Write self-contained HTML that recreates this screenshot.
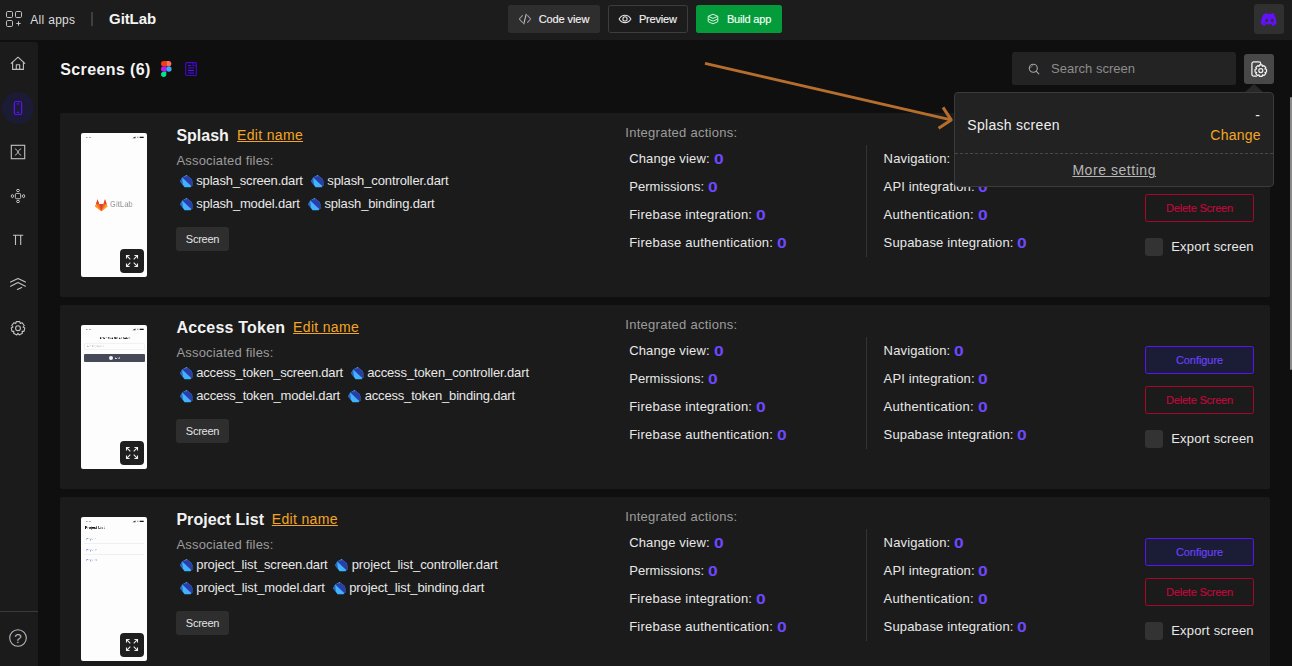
<!DOCTYPE html>
<html lang="en">
<head>
<meta charset="utf-8">
<title>GitLab - Screens</title>
<style>
*{box-sizing:border-box;margin:0;padding:0}
html,body{width:1292px;height:666px;overflow:hidden;background:#0f0f0f;color:#e6e6e6;
  font-family:"Liberation Sans",sans-serif;font-size:13px;}
body{position:relative}
svg{position:absolute;overflow:visible}
.t{position:absolute;white-space:nowrap}
/* header */
#hdr{position:absolute;left:0;top:0;width:1292px;height:40px;background:#1c1c1c}
#hdr .sep{position:absolute;left:91px;top:12px;width:2px;height:14px;background:#3f3f3f}
.hbtn{position:absolute;top:5px;height:28px;border-radius:2.500px}
#b-code{left:508px;width:92px;background:#2e2e2e}
#b-prev{left:608px;width:80px;border:1px solid #3d3d3d}
#b-build{left:696px;width:86px;background:#049c3a}
#b-disc{position:absolute;left:1254px;top:4px;width:30px;height:30px;border-radius:3px;background:#303030}
/* sidebar */
#side{position:absolute;left:0;top:42px;width:38px;height:624px;background:#1b1b1b;border-top-right-radius:3px}
#side .act{position:absolute;left:2px;top:50px;width:32px;height:32px;border-radius:16px;background:#1c1b36}
#side .ln{position:absolute;left:0;top:569px;width:38px;height:1px;background:#3a3a3a}
/* toolbar */
#search{position:absolute;left:1012px;top:52px;width:224px;height:33px;border-radius:2.500px;background:#232323}
#setbtn{position:absolute;left:1244px;top:54px;width:30px;height:30px;border-radius:3px;background:#484848}
#pop{position:absolute;left:954px;top:92px;width:320px;height:95px;border:1px solid #3b3b3b;border-radius:4px;background:#222222}
#pop .hr{position:absolute;left:0;right:0;top:60px;height:1px;background:repeating-linear-gradient(90deg,#484848 0,#484848 3px,transparent 3px,transparent 5px)}
#poparrow{position:absolute;left:1245px;top:84.200px;width:0;height:0;border-left:9px solid transparent;border-right:9px solid transparent;border-bottom:8.500px solid #282828}
#scroll{position:absolute;left:1290px;top:97px;width:2px;height:273px;background:#8a8a8a;border-radius:1px}
/* cards */
.card{position:absolute;left:60px;width:1210px;height:184px;background:#1b1b1b;border-radius:2px}
.card .th{position:absolute;left:21px;top:20px;width:66px;height:144px;background:#fdfdfd;border-radius:2px;overflow:hidden}
.card .ex{position:absolute;left:60px;top:136px;width:24px;height:24px;border-radius:4px;background:#1f1f1f}
.card h3{font-size:16px;font-weight:bold;color:#f2f2f2;line-height:22px}
.card .en{font-size:14px;color:#f5a524;line-height:22px;text-decoration:underline;text-underline-offset:1px;text-decoration-thickness:1px;letter-spacing:.33px}
.card .af{font-size:13px;color:#9c9c9c;line-height:18px;letter-spacing:.19px}
.card .fn{font-size:13px;color:#e8e8e8;line-height:18px}
.card .chip{position:absolute;left:116px;top:114px;width:53px;height:24px;border-radius:3px;background:#2e2e2e}
.card .chip .t{left:0;width:53px;text-align:center;font-size:11px;line-height:16px;color:#e4e4e4;letter-spacing:-.25px}
.card .ia{font-size:13px;color:#9c9c9c;line-height:18px;letter-spacing:.27px}
.card .row{font-size:13px;color:#e8e8e8;line-height:18px}
.card .num{font-size:15px;font-weight:bold;color:#6e48ff;line-height:18px}
.card .vl{position:absolute;left:806px;top:32px;width:1px;height:112px;background:#333}
.card .cfg,.card .del{position:absolute;left:1085px;width:109px;height:28px;border-radius:2.500px}
.card .cfg{top:41px;border:1px solid #5c14f6;background:#1b1c35}
.card .del{top:81px;border:1px solid #a8062c}
.card .cfg .t,.card .del .t{left:0;width:107px;text-align:center;font-size:11px;line-height:16px}
.card .cfg .t{color:#6b42fa;letter-spacing:-.06px;-webkit-text-stroke:.15px #6b42fa}
.card .del .t{color:#c2083c;letter-spacing:-.22px;-webkit-text-stroke:.15px #c2083c}
.card .cb{position:absolute;left:1085px;top:125px;width:18px;height:18px;border-radius:3px;background:#333}
.card .ext{font-size:13px;line-height:18px;color:#e8e8e8;letter-spacing:.18px}
.tiny{position:absolute;white-space:nowrap;transform-origin:0 0;font-size:10px;line-height:10px;will-change:transform}
</style>
</head>
<body>
<div id="hdr">
<svg style="left:6px;top:11px" width="16" height="16" viewBox="0 0 16 16" ><g fill="none" stroke="#c2c2c2" stroke-width="1"><rect x=".5" y=".5" width="6" height="6" rx="1.2"/><rect x="9.5" y=".5" width="6" height="6" rx="1.2"/><rect x=".5" y="9.5" width="6" height="6" rx="1.2"/><path d="M12.5 10.3v4.4M10.3 12.5h4.4"/></g></svg>
<div class="t" style="left:30.3px;top:11.54px;font-size:12px;line-height:16px;color:#dedede;letter-spacing:.3px">All apps</div>
<div class="sep"></div>
<div class="t" style="left:109.1px;top:8.70px;font-size:15px;line-height:20px;color:#f4f4f4;font-weight:bold;letter-spacing:-.1px">GitLab</div>
<div class="hbtn" id="b-code"></div>
<svg style="left:518px;top:13px" width="14" height="12" viewBox="0 0 14 12" ><g fill="none" stroke-width="1.1" stroke-linecap="round" stroke-linejoin="round"><path stroke="#a597a6" d="M4.4 2.600 1.300 6l3.100 3.400M9.600 2.600 12.700 6 9.600 9.400"/><path stroke="#c4c4c4" d="M8.200 1.200 5.800 10.800"/></g></svg>
<div class="t" style="left:538.7px;top:11.29px;font-size:11px;line-height:16px;color:#f2f2f2;letter-spacing:-.09px;-webkit-text-stroke:.15px #f2f2f2">Code view</div>
<div class="hbtn" id="b-prev"></div>
<svg style="left:618px;top:13px" width="14" height="12" viewBox="0 0 14 12" ><g fill="none" stroke="#e2e2e2" stroke-width="1.1"><path d="M1.1 5.9C2.6 3.3 4.6 2.2 7 2.2s4.4 1.1 5.9 3.7C11.4 8.5 9.4 9.6 7 9.6S2.6 8.5 1.1 5.9Z"/><circle cx="7" cy="5.9" r="2.1"/></g></svg>
<div class="t" style="left:638.9px;top:11.29px;font-size:11px;line-height:16px;color:#f2f2f2;letter-spacing:-.17px;-webkit-text-stroke:.15px #f2f2f2">Preview</div>
<div class="hbtn" id="b-build"></div>
<svg style="left:707px;top:13px" width="12" height="12" viewBox="0 0 12 12" ><g fill="none" stroke="#d9f2e2" stroke-width="1" stroke-linejoin="round"><path d="M6 1.2 10.8 3.3 6 5.4 1.2 3.3Z"/><path d="M1.2 3.4v5.3L6 10.8l4.8-2.1V3.4"/><path d="M1.2 6 6 8.1 10.8 6"/></g></svg>
<div class="t" style="left:726.9px;top:11.29px;font-size:11px;line-height:16px;color:#f6fff8;letter-spacing:-.18px;-webkit-text-stroke:.15px #f6fff8">Build app</div>
<div id="b-disc"></div>
<svg style="left:1260.5px;top:12.5px" width="17" height="13.5" viewBox="0 0 17 13.5" ><path fill="#6411fb" d="M14.4 1.2C13.3.7 12.2.3 11 .1c-.2.3-.3.6-.5.9a11 11 0 0 0-4 0C6.400.7 6.200.4 6 .1 4.800.3 3.700.7 2.600 1.200.4 4.500-.2 7.700.100 10.900c1.300 1 2.600 1.600 3.900 2 .3-.4.600-.900.800-1.400-.4-.2-.9-.4-1.300-.6l.3-.3c2.500 1.200 5.300 1.200 7.800 0l.3.300c-.4.200-.8.400-1.300.600.200.500.500 1 .800 1.400 1.300-.4 2.600-1 3.900-2 .4-3.700-.6-6.900-2.500-9.700ZM5.700 9C4.900 9 4.300 8.300 4.300 7.400s.6-1.600 1.400-1.600 1.400.700 1.400 1.600S6.500 9 5.700 9Zm5.600 0c-.8 0-1.400-.7-1.400-1.600s.6-1.600 1.400-1.600 1.400.700 1.400 1.600S12.100 9 11.300 9Z"/></svg>
</div>
<div id="side"><div class="act"></div><div class="ln"></div></div>
<svg style="left:10px;top:56px" width="16" height="15" viewBox="0 0 16 15" ><g fill="none" stroke="#c2c2c2" stroke-width="1.1" stroke-linejoin="round" stroke-linecap="round"><path d="M1.2 7.3 8 1.200l6.800 6.100"/><path d="M2.600 6.300v7.100h10.800V6.300"/><path d="M6.300 13.400V8.700h3.400v4.700"/></g></svg><svg style="left:13px;top:100px" width="10" height="16" viewBox="0 0 10 16" ><g fill="none" stroke="#5a12f2" stroke-width="1.2" stroke-linecap="round"><rect x="1.400" y="1.500" width="7.200" height="13" rx="1.600"/><path d="M4.200 3.800h1.600M4.200 12.300h1.600"/></g></svg><svg style="left:10px;top:144px" width="16" height="16" viewBox="0 0 16 16" ><g fill="none" stroke="#c2c2c2" stroke-width="1.1" stroke-linecap="round"><rect x="1.300" y="1.300" width="13.400" height="13.400"/><path d="M5.200 4.800Q7.900 6.300 7.900 8T5.200 11.200M10.800 4.800Q8.100 6.300 8.100 8t2.700 3.200" stroke-width=".9"/></g></svg><svg style="left:10px;top:188px" width="16" height="16" viewBox="0 0 16 16" ><g fill="none" stroke="#c2c2c2" stroke-width="1"><rect x="5.300" y="5.400" width="5.400" height="5.400" rx="1.500"/><ellipse cx="8" cy="2.500" rx="1.500" ry="1.100"/><ellipse cx="8" cy="13.500" rx="1.500" ry="1.100"/><ellipse cx="2.400" cy="8.100" rx="1.100" ry="1.500"/><ellipse cx="13.600" cy="8.100" rx="1.100" ry="1.500"/></g></svg><svg style="left:12px;top:234px" width="12" height="12" viewBox="0 0 12 12" ><g fill="none" stroke="#c2c2c2" stroke-width="1.100"><path d="M1 1.300h10.200M3.500 1.300v9.600M8.700 1.300v9.600"/></g></svg><svg style="left:9px;top:277px" width="18" height="14" viewBox="0 0 18 14" ><g fill="none" stroke="#c2c2c2" stroke-width="1.100" stroke-linecap="round" stroke-linejoin="round"><path d="M1.600 5.100 9 1.400l7.400 3.700"/><path d="M1.600 9.300 9 5.600l7.400 3.700"/><path d="M8.400 12.500l4.300-2.100"/></g></svg><svg style="left:10px;top:320px" width="16" height="16" viewBox="0 0 16 16" ><path d="M5.79 3.49 L6.21 1.64 L9.79 1.64 L10.21 3.49 L10.30 3.54 L12.01 2.71 L14.25 5.51 L13.06 7.00 L13.08 7.09 L14.79 7.91 L14.00 11.41 L12.09 11.41 L12.04 11.48 L12.46 13.33 L9.23 14.89 L8.05 13.40 L7.95 13.40 L6.77 14.89 L3.54 13.33 L3.96 11.48 L3.91 11.41 L2.00 11.41 L1.21 7.91 L2.92 7.09 L2.94 7.00 L1.75 5.51 L3.99 2.71 L5.70 3.54Z" fill="none" stroke="#c2c2c2" stroke-width="1.1" stroke-linejoin="round"/><circle cx="8" cy="8.2" r="2.4" fill="none" stroke="#c2c2c2" stroke-width="1.1"/></svg><svg style="left:9px;top:629px" width="18" height="18" viewBox="0 0 18 18" ><circle cx="9" cy="9" r="8.300" fill="none" stroke="#b9b9b9" stroke-width="1.100"/><text x="9" y="13.700" text-anchor="middle" font-family="Liberation Sans, sans-serif" font-size="13.500" fill="#b9b9b9">?</text></svg>
<h1 class="t" style="left:60.3px;top:59.46px;font-size:16px;line-height:22px;color:#f4f4f4;font-weight:bold;letter-spacing:.37px">Screens (6)</h1>
<svg style="left:161.3px;top:61px" width="10.6" height="16" viewBox="0 0 10.6 16" ><path fill="#f53b0c" d="M0 2.670A2.670 2.670 0 0 1 2.670 0H5.300v5.330H2.670A2.670 2.670 0 0 1 0 2.670Z"/><path fill="#ff6b57" d="M5.300 0h2.630a2.670 2.670 0 0 1 0 5.330H5.300Z"/><path fill="#b41ef5" d="M0 8a2.670 2.670 0 0 1 2.670-2.670H5.300v5.340H2.670A2.670 2.670 0 0 1 0 8Z"/><circle fill="#3ea8ff" cx="7.930" cy="8" r="2.670"/><path fill="#05e08a" d="M0 13.330a2.670 2.670 0 0 1 2.670-2.660H5.300v2.660a2.650 2.650 0 0 1-5.300 0Z"/></svg><svg style="left:185px;top:62px" width="12" height="14" viewBox="0 0 12 14" ><rect x=".700" y=".600" width="10.600" height="12.900" rx="1" fill="none" stroke="#4407d4" stroke-width="1.150"/><path d="M8 .800V3.800h3.200" fill="none" stroke="#4407d4" stroke-width="1"/><path d="M2.900 3.600h3.200M2.900 8.500h6.200" fill="none" stroke="#5a12ff" stroke-width="1"/><path d="M2.900 6h6.200M2.900 11h6.200" fill="none" stroke="#3a08b4" stroke-width="1.500"/></svg>
<div id="search"></div>
<svg style="left:1028px;top:63px" width="12" height="12" viewBox="0 0 12 12" ><g fill="none" stroke="#a6a6a6" stroke-width="1.100" stroke-linecap="round"><circle cx="5.300" cy="5.300" r="4"/><path d="M8.300 8.300l2.500 2.500"/><path d="M2.600 4.700A2.800 2.800 0 0 1 4.900 2.500" stroke="#8a8088" stroke-width=".800"/></g></svg>
<div class="t" style="left:1051px;top:59.90px;font-size:13px;line-height:18px;color:#8c8c8c;letter-spacing:.02px">Search screen</div>
<div id="setbtn"></div>
<svg style="left:1250px;top:60px" width="18" height="18" viewBox="0 0 18 18" ><g fill="none" stroke="#f4f4f4" stroke-width="1.250" stroke-linecap="round"><path d="M8.800 1.800H3.900A2 2 0 0 0 1.900 3.800v10.400a2 2 0 0 0 2 2h2.500M8.800 1.800a2 2 0 0 1 2 1.900v1"/></g><path d="M9.11 6.43 L9.43 4.86 L12.17 4.86 L12.49 6.43 L12.55 6.46 L13.89 5.58 L15.82 7.51 L14.94 8.85 L14.97 8.91 L16.54 9.23 L16.54 11.97 L14.97 12.29 L14.94 12.35 L15.82 13.69 L13.89 15.62 L12.55 14.74 L12.49 14.77 L12.17 16.34 L9.43 16.34 L9.11 14.77 L9.05 14.74 L7.71 15.62 L5.78 13.69 L6.66 12.35 L6.63 12.29 L5.06 11.97 L5.06 9.23 L6.63 8.91 L6.66 8.85 L5.78 7.51 L7.71 5.58 L9.05 6.46Z" fill="none" stroke="#f4f4f4" stroke-width="1.2" stroke-linejoin="round"/><circle cx="10.8" cy="10.6" r="2.0" fill="none" stroke="#f4f4f4" stroke-width="1.2"/></svg>
<div id="scroll"></div>
<div class="card" style="top:113px">
<div class="th"><div class="tiny" style="left:5.400px;top:2.600px;transform:scale(.24);color:#555;font-weight:bold">9:41</div><svg style="left:51.200px;top:2.500px" width="12" height="3" viewBox="0 0 12 3"><path fill="#2a2a2a" d="M.300 2.300 3.500.500v1.800Z"/><circle cx="5.800" cy="1.300" r=".800" fill="#9a9a9a"/><path fill="#111" d="M7.700.800h4v1.300h-4Z"/></svg><svg style="left:14.300px;top:65.600px" width="12.600" height="12.200" viewBox="0 0 12.600 12.200"><path fill="#fc6d26" d="M6.300 12.200 12.400 7.600 11.600 5 10 .2 8.500 5H4.100L2.600.2 1 5 .2 7.600Z"/><path fill="#e24329" d="M6.300 12.200 8.500 5H4.100Z"/><path fill="#fca326" d="M.2 7.600 1 5l5.300 7.200ZM12.400 7.600 11.600 5 6.300 12.200Z"/><path fill="#e24329" d="M1 5h3.100L2.600.2ZM11.600 5H8.500L10 .2Z"/></svg><div class="tiny" style="left:29px;top:68px;transform:scale(.74);color:#8e8e8e;letter-spacing:.2px">GitLab</div></div>
<div class="ex"><svg style="left:6px;top:6.300px" width="12" height="12" viewBox="0 0 12 12"><g fill="none" stroke="#ededed" stroke-width="1.100" stroke-linejoin="miter"><path d="M.500 3.600V.500H3.600M.700.700 4.300 4.300M8.400.500h3.100V3.600M11.300.700 7.700 4.300M.500 8.400v3.100H3.600M.700 11.300 4.300 7.700M11.500 8.400v3.100H8.400M11.300 11.300 7.700 7.700"/></g></svg></div>
<h3 class="t" style="left:116.4px;top:12.26px;font-size:16px;line-height:22px;letter-spacing:0.0px">Splash</h3>
<div class="t en" style="left:177.0px;top:10.55px;font-size:14px;line-height:22px;">Edit name</div>
<div class="t af" style="left:116.4px;top:39.40px;font-size:13px;line-height:18px;">Associated files:</div>
<svg style="left:120.0px;top:62px" width="12.400" height="12.400" viewBox="0 0 12.400 12.400"><path fill="#40b2ff" d="M2.200 2.500 6.600 0 11.300 3.700 12.300 6.100V10.200L10.500 12.300H4.600L0 6.300Z"/><path fill="#2a3ea6" d="M2.200 2.600 4.300 1.400 7.800 1 11.300 3.700 12.300 6.100V10.200L11.500 11.200Z"/><path fill="#2450b4" d="M0 6.300 2.200 2.500 2.900 9.900Z" opacity=".8"/></svg>
<div class="t fn" style="left:136.3px;top:59.40px;font-size:13px;line-height:18px;letter-spacing:-0.191px">splash_screen.dart</div>
<svg style="left:251.0px;top:62px" width="12.400" height="12.400" viewBox="0 0 12.400 12.400"><path fill="#40b2ff" d="M2.200 2.500 6.600 0 11.300 3.700 12.300 6.100V10.200L10.500 12.300H4.600L0 6.300Z"/><path fill="#2a3ea6" d="M2.200 2.600 4.300 1.400 7.800 1 11.300 3.700 12.300 6.100V10.200L11.500 11.200Z"/><path fill="#2450b4" d="M0 6.300 2.200 2.500 2.900 9.900Z" opacity=".8"/></svg>
<div class="t fn" style="left:267.3px;top:59.40px;font-size:13px;line-height:18px;letter-spacing:-0.108px">splash_controller.dart</div>
<svg style="left:120.0px;top:85px" width="12.400" height="12.400" viewBox="0 0 12.400 12.400"><path fill="#40b2ff" d="M2.200 2.500 6.600 0 11.300 3.700 12.300 6.100V10.200L10.500 12.300H4.600L0 6.300Z"/><path fill="#2a3ea6" d="M2.200 2.600 4.300 1.400 7.800 1 11.300 3.700 12.300 6.100V10.200L11.500 11.200Z"/><path fill="#2450b4" d="M0 6.300 2.200 2.500 2.900 9.900Z" opacity=".8"/></svg>
<div class="t fn" style="left:136.3px;top:81.90px;font-size:13px;line-height:18px;letter-spacing:-0.164px">splash_model.dart</div>
<svg style="left:248.1px;top:85px" width="12.400" height="12.400" viewBox="0 0 12.400 12.400"><path fill="#40b2ff" d="M2.200 2.500 6.600 0 11.300 3.700 12.300 6.100V10.200L10.500 12.300H4.600L0 6.300Z"/><path fill="#2a3ea6" d="M2.200 2.600 4.300 1.400 7.800 1 11.300 3.700 12.300 6.100V10.200L11.500 11.200Z"/><path fill="#2450b4" d="M0 6.300 2.200 2.500 2.900 9.900Z" opacity=".8"/></svg>
<div class="t fn" style="left:264.4px;top:81.90px;font-size:13px;line-height:18px;letter-spacing:-0.136px">splash_binding.dart</div>
<div class="chip"><div class="t" style="left:0px;top:4.39px;font-size:11px;line-height:16px;">Screen</div></div>
<div class="t ia" style="left:565.3px;top:11.40px;font-size:13px;line-height:18px;">Integrated actions:</div>
<div class="t row" style="left:569.2px;top:37.30px;font-size:13px;line-height:18px;letter-spacing:0.148px">Change view:</div>
<b class="t num" style="left:653.7px;top:36.73px;font-size:15.5px;line-height:18px;transform:scaleX(1.12);transform-origin:0 0">0</b>
<div class="t row" style="left:823.6px;top:37.30px;font-size:13px;line-height:18px;letter-spacing:0.156px">Navigation:</div>
<b class="t num" style="left:894.0px;top:36.73px;font-size:15.5px;line-height:18px;transform:scaleX(1.12);transform-origin:0 0">0</b>
<div class="t row" style="left:569.2px;top:65.30px;font-size:13px;line-height:18px;letter-spacing:0.054px">Permissions:</div>
<b class="t num" style="left:648.1px;top:64.73px;font-size:15.5px;line-height:18px;transform:scaleX(1.12);transform-origin:0 0">0</b>
<div class="t row" style="left:823.6px;top:65.30px;font-size:13px;line-height:18px;letter-spacing:0.134px">API integration:</div>
<b class="t num" style="left:918.2px;top:64.73px;font-size:15.5px;line-height:18px;transform:scaleX(1.12);transform-origin:0 0">0</b>
<div class="t row" style="left:569.2px;top:93.30px;font-size:13px;line-height:18px;letter-spacing:0.214px">Firebase integration:</div>
<b class="t num" style="left:695.6px;top:92.73px;font-size:15.5px;line-height:18px;transform:scaleX(1.12);transform-origin:0 0">0</b>
<div class="t row" style="left:823.6px;top:93.30px;font-size:13px;line-height:18px;letter-spacing:0.293px">Authentication:</div>
<b class="t num" style="left:917.5px;top:92.73px;font-size:15.5px;line-height:18px;transform:scaleX(1.12);transform-origin:0 0">0</b>
<div class="t row" style="left:569.2px;top:121.30px;font-size:13px;line-height:18px;letter-spacing:0.215px">Firebase authentication:</div>
<b class="t num" style="left:716.6px;top:120.73px;font-size:15.5px;line-height:18px;transform:scaleX(1.12);transform-origin:0 0">0</b>
<div class="t row" style="left:823.6px;top:121.30px;font-size:13px;line-height:18px;letter-spacing:0.166px">Supabase integration:</div>
<b class="t num" style="left:957.2px;top:120.73px;font-size:15.5px;line-height:18px;transform:scaleX(1.12);transform-origin:0 0">0</b>
<div class="vl"></div>
<div class="del"><div class="t" style="left:0px;top:5.29px;font-size:11px;line-height:16px;">Delete Screen</div></div>
<div class="cb"></div>
<div class="t ext" style="left:1111.2px;top:124.70px;font-size:13px;line-height:18px;">Export screen</div>
</div>
<div class="card" style="top:305px">
<div class="th"><div class="tiny" style="left:5.400px;top:2.600px;transform:scale(.24);color:#555;font-weight:bold">9:41</div><svg style="left:51.200px;top:2.500px" width="12" height="3" viewBox="0 0 12 3"><path fill="#2a2a2a" d="M.300 2.300 3.500.500v1.800Z"/><circle cx="5.800" cy="1.300" r=".800" fill="#9a9a9a"/><path fill="#111" d="M7.700.800h4v1.300h-4Z"/></svg><div class="tiny" style="left:19px;top:11.800px;transform:scale(.262);color:#000;font-weight:bold;line-height:10px;-webkit-text-stroke:.200px #000">Enter Your GitLab Token</div><div style="position:absolute;left:3px;top:17.600px;width:60.500px;height:7px;border:1px solid #f2f2f2;border-radius:1px"></div><div class="tiny" style="left:5.500px;top:19.700px;transform:scale(.27);color:#bbbbbb">API KeyToken</div><div style="position:absolute;left:3px;top:29px;width:60.500px;height:7.900px;background:#454958;border-radius:1px"></div><div style="position:absolute;left:28.300px;top:31.300px;width:3.400px;height:3.400px;border-radius:2px;background:#f4f4f4"></div><div class="tiny" style="left:33.500px;top:31.600px;transform:scale(.27);color:#e6e6e6">Add</div></div>
<div class="ex"><svg style="left:6px;top:6.300px" width="12" height="12" viewBox="0 0 12 12"><g fill="none" stroke="#ededed" stroke-width="1.100" stroke-linejoin="miter"><path d="M.500 3.600V.500H3.600M.700.700 4.300 4.300M8.400.500h3.100V3.600M11.300.700 7.700 4.300M.500 8.400v3.100H3.600M.700 11.300 4.300 7.700M11.500 8.400v3.100H8.400M11.300 11.300 7.700 7.700"/></g></svg></div>
<h3 class="t" style="left:116.4px;top:12.26px;font-size:16px;line-height:22px;letter-spacing:0.2px">Access Token</h3>
<div class="t en" style="left:233.09999999999997px;top:10.55px;font-size:14px;line-height:22px;">Edit name</div>
<div class="t af" style="left:116.4px;top:39.40px;font-size:13px;line-height:18px;">Associated files:</div>
<svg style="left:120.0px;top:62px" width="12.400" height="12.400" viewBox="0 0 12.400 12.400"><path fill="#40b2ff" d="M2.200 2.500 6.600 0 11.300 3.700 12.300 6.100V10.200L10.500 12.300H4.600L0 6.300Z"/><path fill="#2a3ea6" d="M2.200 2.600 4.300 1.400 7.800 1 11.300 3.700 12.300 6.100V10.200L11.500 11.200Z"/><path fill="#2450b4" d="M0 6.300 2.200 2.500 2.900 9.900Z" opacity=".8"/></svg>
<div class="t fn" style="left:136.3px;top:59.40px;font-size:13px;line-height:18px;letter-spacing:-0.215px">access_token_screen.dart</div>
<svg style="left:290.9px;top:62px" width="12.400" height="12.400" viewBox="0 0 12.400 12.400"><path fill="#40b2ff" d="M2.200 2.500 6.600 0 11.300 3.700 12.300 6.100V10.200L10.500 12.300H4.600L0 6.300Z"/><path fill="#2a3ea6" d="M2.200 2.600 4.300 1.400 7.800 1 11.300 3.700 12.300 6.100V10.200L11.500 11.200Z"/><path fill="#2450b4" d="M0 6.300 2.200 2.500 2.900 9.900Z" opacity=".8"/></svg>
<div class="t fn" style="left:307.2px;top:59.40px;font-size:13px;line-height:18px;letter-spacing:-0.136px">access_token_controller.dart</div>
<svg style="left:120.0px;top:85px" width="12.400" height="12.400" viewBox="0 0 12.400 12.400"><path fill="#40b2ff" d="M2.200 2.500 6.600 0 11.300 3.700 12.300 6.100V10.200L10.500 12.300H4.600L0 6.300Z"/><path fill="#2a3ea6" d="M2.200 2.600 4.300 1.400 7.800 1 11.300 3.700 12.300 6.100V10.200L11.500 11.200Z"/><path fill="#2450b4" d="M0 6.300 2.200 2.500 2.900 9.900Z" opacity=".8"/></svg>
<div class="t fn" style="left:136.3px;top:81.90px;font-size:13px;line-height:18px;letter-spacing:-0.193px">access_token_model.dart</div>
<svg style="left:288.4px;top:85px" width="12.400" height="12.400" viewBox="0 0 12.400 12.400"><path fill="#40b2ff" d="M2.200 2.500 6.600 0 11.300 3.700 12.300 6.100V10.200L10.500 12.300H4.600L0 6.300Z"/><path fill="#2a3ea6" d="M2.200 2.600 4.300 1.400 7.800 1 11.300 3.700 12.300 6.100V10.200L11.500 11.200Z"/><path fill="#2450b4" d="M0 6.300 2.200 2.500 2.900 9.900Z" opacity=".8"/></svg>
<div class="t fn" style="left:304.7px;top:81.90px;font-size:13px;line-height:18px;letter-spacing:-0.178px">access_token_binding.dart</div>
<div class="chip"><div class="t" style="left:0px;top:4.39px;font-size:11px;line-height:16px;">Screen</div></div>
<div class="t ia" style="left:565.3px;top:11.40px;font-size:13px;line-height:18px;">Integrated actions:</div>
<div class="t row" style="left:569.2px;top:37.30px;font-size:13px;line-height:18px;letter-spacing:0.148px">Change view:</div>
<b class="t num" style="left:653.7px;top:36.73px;font-size:15.5px;line-height:18px;transform:scaleX(1.12);transform-origin:0 0">0</b>
<div class="t row" style="left:823.6px;top:37.30px;font-size:13px;line-height:18px;letter-spacing:0.156px">Navigation:</div>
<b class="t num" style="left:894.0px;top:36.73px;font-size:15.5px;line-height:18px;transform:scaleX(1.12);transform-origin:0 0">0</b>
<div class="t row" style="left:569.2px;top:65.30px;font-size:13px;line-height:18px;letter-spacing:0.054px">Permissions:</div>
<b class="t num" style="left:648.1px;top:64.73px;font-size:15.5px;line-height:18px;transform:scaleX(1.12);transform-origin:0 0">0</b>
<div class="t row" style="left:823.6px;top:65.30px;font-size:13px;line-height:18px;letter-spacing:0.134px">API integration:</div>
<b class="t num" style="left:918.2px;top:64.73px;font-size:15.5px;line-height:18px;transform:scaleX(1.12);transform-origin:0 0">0</b>
<div class="t row" style="left:569.2px;top:93.30px;font-size:13px;line-height:18px;letter-spacing:0.214px">Firebase integration:</div>
<b class="t num" style="left:695.6px;top:92.73px;font-size:15.5px;line-height:18px;transform:scaleX(1.12);transform-origin:0 0">0</b>
<div class="t row" style="left:823.6px;top:93.30px;font-size:13px;line-height:18px;letter-spacing:0.293px">Authentication:</div>
<b class="t num" style="left:917.5px;top:92.73px;font-size:15.5px;line-height:18px;transform:scaleX(1.12);transform-origin:0 0">0</b>
<div class="t row" style="left:569.2px;top:121.30px;font-size:13px;line-height:18px;letter-spacing:0.215px">Firebase authentication:</div>
<b class="t num" style="left:716.6px;top:120.73px;font-size:15.5px;line-height:18px;transform:scaleX(1.12);transform-origin:0 0">0</b>
<div class="t row" style="left:823.6px;top:121.30px;font-size:13px;line-height:18px;letter-spacing:0.166px">Supabase integration:</div>
<b class="t num" style="left:957.2px;top:120.73px;font-size:15.5px;line-height:18px;transform:scaleX(1.12);transform-origin:0 0">0</b>
<div class="vl"></div>
<div class="cfg"><div class="t" style="left:0px;top:5.49px;font-size:11px;line-height:16px;">Configure</div></div>
<div class="del"><div class="t" style="left:0px;top:5.29px;font-size:11px;line-height:16px;">Delete Screen</div></div>
<div class="cb"></div>
<div class="t ext" style="left:1111.2px;top:124.70px;font-size:13px;line-height:18px;">Export screen</div>
</div>
<div class="card" style="top:497px">
<div class="th"><div class="tiny" style="left:5.400px;top:2.600px;transform:scale(.24);color:#555;font-weight:bold">9:41</div><svg style="left:51.200px;top:2.500px" width="12" height="3" viewBox="0 0 12 3"><path fill="#2a2a2a" d="M.300 2.300 3.500.500v1.800Z"/><circle cx="5.800" cy="1.300" r=".800" fill="#9a9a9a"/><path fill="#111" d="M7.700.800h4v1.300h-4Z"/></svg><div class="tiny" style="left:3.800px;top:8.600px;transform:scale(.36);color:#000;font-weight:bold">Project List</div><div class="tiny" style="left:5px;top:20.6px;transform:scale(.27);color:#7f9bd0">Project 1</div><div style="position:absolute;left:3px;top:26px;width:60px;height:1px;background:#f0f0f0"></div><div class="tiny" style="left:5px;top:31.6px;transform:scale(.27);color:#7f9bd0">Project 2</div><div style="position:absolute;left:3px;top:37px;width:60px;height:1px;background:#f0f0f0"></div><div class="tiny" style="left:5px;top:42.4px;transform:scale(.27);color:#7f9bd0">Project 3</div></div>
<div class="ex"><svg style="left:6px;top:6.300px" width="12" height="12" viewBox="0 0 12 12"><g fill="none" stroke="#ededed" stroke-width="1.100" stroke-linejoin="miter"><path d="M.500 3.600V.500H3.600M.700.700 4.300 4.300M8.400.500h3.100V3.600M11.300.700 7.700 4.300M.500 8.400v3.100H3.600M.700 11.300 4.300 7.700M11.500 8.400v3.100H8.400M11.300 11.300 7.700 7.700"/></g></svg></div>
<h3 class="t" style="left:116.4px;top:12.26px;font-size:16px;line-height:22px;letter-spacing:0.05px">Project List</h3>
<div class="t en" style="left:211.8px;top:10.55px;font-size:14px;line-height:22px;">Edit name</div>
<div class="t af" style="left:116.4px;top:39.40px;font-size:13px;line-height:18px;">Associated files:</div>
<svg style="left:120.0px;top:62px" width="12.400" height="12.400" viewBox="0 0 12.400 12.400"><path fill="#40b2ff" d="M2.200 2.500 6.600 0 11.300 3.700 12.300 6.100V10.200L10.500 12.300H4.600L0 6.300Z"/><path fill="#2a3ea6" d="M2.200 2.600 4.300 1.400 7.800 1 11.300 3.700 12.300 6.100V10.200L11.500 11.200Z"/><path fill="#2450b4" d="M0 6.300 2.200 2.500 2.900 9.900Z" opacity=".8"/></svg>
<div class="t fn" style="left:136.3px;top:59.40px;font-size:13px;line-height:18px;letter-spacing:-0.130px">project_list_screen.dart</div>
<svg style="left:275.4px;top:62px" width="12.400" height="12.400" viewBox="0 0 12.400 12.400"><path fill="#40b2ff" d="M2.200 2.500 6.600 0 11.300 3.700 12.300 6.100V10.200L10.500 12.300H4.600L0 6.300Z"/><path fill="#2a3ea6" d="M2.200 2.600 4.300 1.400 7.800 1 11.300 3.700 12.300 6.100V10.200L11.500 11.200Z"/><path fill="#2450b4" d="M0 6.300 2.200 2.500 2.900 9.900Z" opacity=".8"/></svg>
<div class="t fn" style="left:291.7px;top:59.40px;font-size:13px;line-height:18px;letter-spacing:-0.068px">project_list_controller.dart</div>
<svg style="left:120.0px;top:85px" width="12.400" height="12.400" viewBox="0 0 12.400 12.400"><path fill="#40b2ff" d="M2.200 2.500 6.600 0 11.300 3.700 12.300 6.100V10.200L10.500 12.300H4.600L0 6.300Z"/><path fill="#2a3ea6" d="M2.200 2.600 4.300 1.400 7.800 1 11.300 3.700 12.300 6.100V10.200L11.500 11.200Z"/><path fill="#2450b4" d="M0 6.300 2.200 2.500 2.900 9.900Z" opacity=".8"/></svg>
<div class="t fn" style="left:136.3px;top:81.90px;font-size:13px;line-height:18px;letter-spacing:-0.104px">project_list_model.dart</div>
<svg style="left:272.9px;top:85px" width="12.400" height="12.400" viewBox="0 0 12.400 12.400"><path fill="#40b2ff" d="M2.200 2.500 6.600 0 11.300 3.700 12.300 6.100V10.200L10.500 12.300H4.600L0 6.300Z"/><path fill="#2a3ea6" d="M2.200 2.600 4.300 1.400 7.800 1 11.300 3.700 12.300 6.100V10.200L11.500 11.200Z"/><path fill="#2450b4" d="M0 6.300 2.200 2.500 2.900 9.900Z" opacity=".8"/></svg>
<div class="t fn" style="left:289.2px;top:81.90px;font-size:13px;line-height:18px;letter-spacing:-0.088px">project_list_binding.dart</div>
<div class="chip"><div class="t" style="left:0px;top:4.39px;font-size:11px;line-height:16px;">Screen</div></div>
<div class="t ia" style="left:565.3px;top:11.40px;font-size:13px;line-height:18px;">Integrated actions:</div>
<div class="t row" style="left:569.2px;top:37.30px;font-size:13px;line-height:18px;letter-spacing:0.148px">Change view:</div>
<b class="t num" style="left:653.7px;top:36.73px;font-size:15.5px;line-height:18px;transform:scaleX(1.12);transform-origin:0 0">0</b>
<div class="t row" style="left:823.6px;top:37.30px;font-size:13px;line-height:18px;letter-spacing:0.156px">Navigation:</div>
<b class="t num" style="left:894.0px;top:36.73px;font-size:15.5px;line-height:18px;transform:scaleX(1.12);transform-origin:0 0">0</b>
<div class="t row" style="left:569.2px;top:65.30px;font-size:13px;line-height:18px;letter-spacing:0.054px">Permissions:</div>
<b class="t num" style="left:648.1px;top:64.73px;font-size:15.5px;line-height:18px;transform:scaleX(1.12);transform-origin:0 0">0</b>
<div class="t row" style="left:823.6px;top:65.30px;font-size:13px;line-height:18px;letter-spacing:0.134px">API integration:</div>
<b class="t num" style="left:918.2px;top:64.73px;font-size:15.5px;line-height:18px;transform:scaleX(1.12);transform-origin:0 0">0</b>
<div class="t row" style="left:569.2px;top:93.30px;font-size:13px;line-height:18px;letter-spacing:0.214px">Firebase integration:</div>
<b class="t num" style="left:695.6px;top:92.73px;font-size:15.5px;line-height:18px;transform:scaleX(1.12);transform-origin:0 0">0</b>
<div class="t row" style="left:823.6px;top:93.30px;font-size:13px;line-height:18px;letter-spacing:0.293px">Authentication:</div>
<b class="t num" style="left:917.5px;top:92.73px;font-size:15.5px;line-height:18px;transform:scaleX(1.12);transform-origin:0 0">0</b>
<div class="t row" style="left:569.2px;top:121.30px;font-size:13px;line-height:18px;letter-spacing:0.215px">Firebase authentication:</div>
<b class="t num" style="left:716.6px;top:120.73px;font-size:15.5px;line-height:18px;transform:scaleX(1.12);transform-origin:0 0">0</b>
<div class="t row" style="left:823.6px;top:121.30px;font-size:13px;line-height:18px;letter-spacing:0.166px">Supabase integration:</div>
<b class="t num" style="left:957.2px;top:120.73px;font-size:15.5px;line-height:18px;transform:scaleX(1.12);transform-origin:0 0">0</b>
<div class="vl"></div>
<div class="cfg"><div class="t" style="left:0px;top:5.49px;font-size:11px;line-height:16px;">Configure</div></div>
<div class="del"><div class="t" style="left:0px;top:5.29px;font-size:11px;line-height:16px;">Delete Screen</div></div>
<div class="cb"></div>
<div class="t ext" style="left:1111.2px;top:124.70px;font-size:13px;line-height:18px;">Export screen</div>
</div>
<svg style="left:0;top:0" width="1292" height="200" viewBox="0 0 1292 200"><g fill="none" stroke="#b66e2d" stroke-width="3" stroke-linecap="butt" stroke-linejoin="round"><path d="M705 63.400 951 119.900"/><path d="M943 107.400 951.200 119.900 938.600 128.300"/></g></svg>
<div id="poparrow"></div>
<div id="pop"><div class="hr"></div></div>
<div class="t" style="left:967.3px;top:115.15px;font-size:14px;line-height:20px;color:#eeeeee;letter-spacing:.29px">Splash screen</div>
<div class="t" style="left:1255.3px;top:104.55px;font-size:14px;line-height:20px;color:#eeeeee">-</div>
<div class="t" style="left:1210.3px;top:125.05px;font-size:14px;line-height:20px;color:#f5a524;letter-spacing:.25px">Change</div>
<div class="t" style="left:1072.4px;top:159.75px;font-size:14px;line-height:20px;color:#b6b6b6;letter-spacing:.55px;text-decoration:underline;text-underline-offset:1.200px;text-decoration-thickness:1px">More setting</div>
</body>
</html>
